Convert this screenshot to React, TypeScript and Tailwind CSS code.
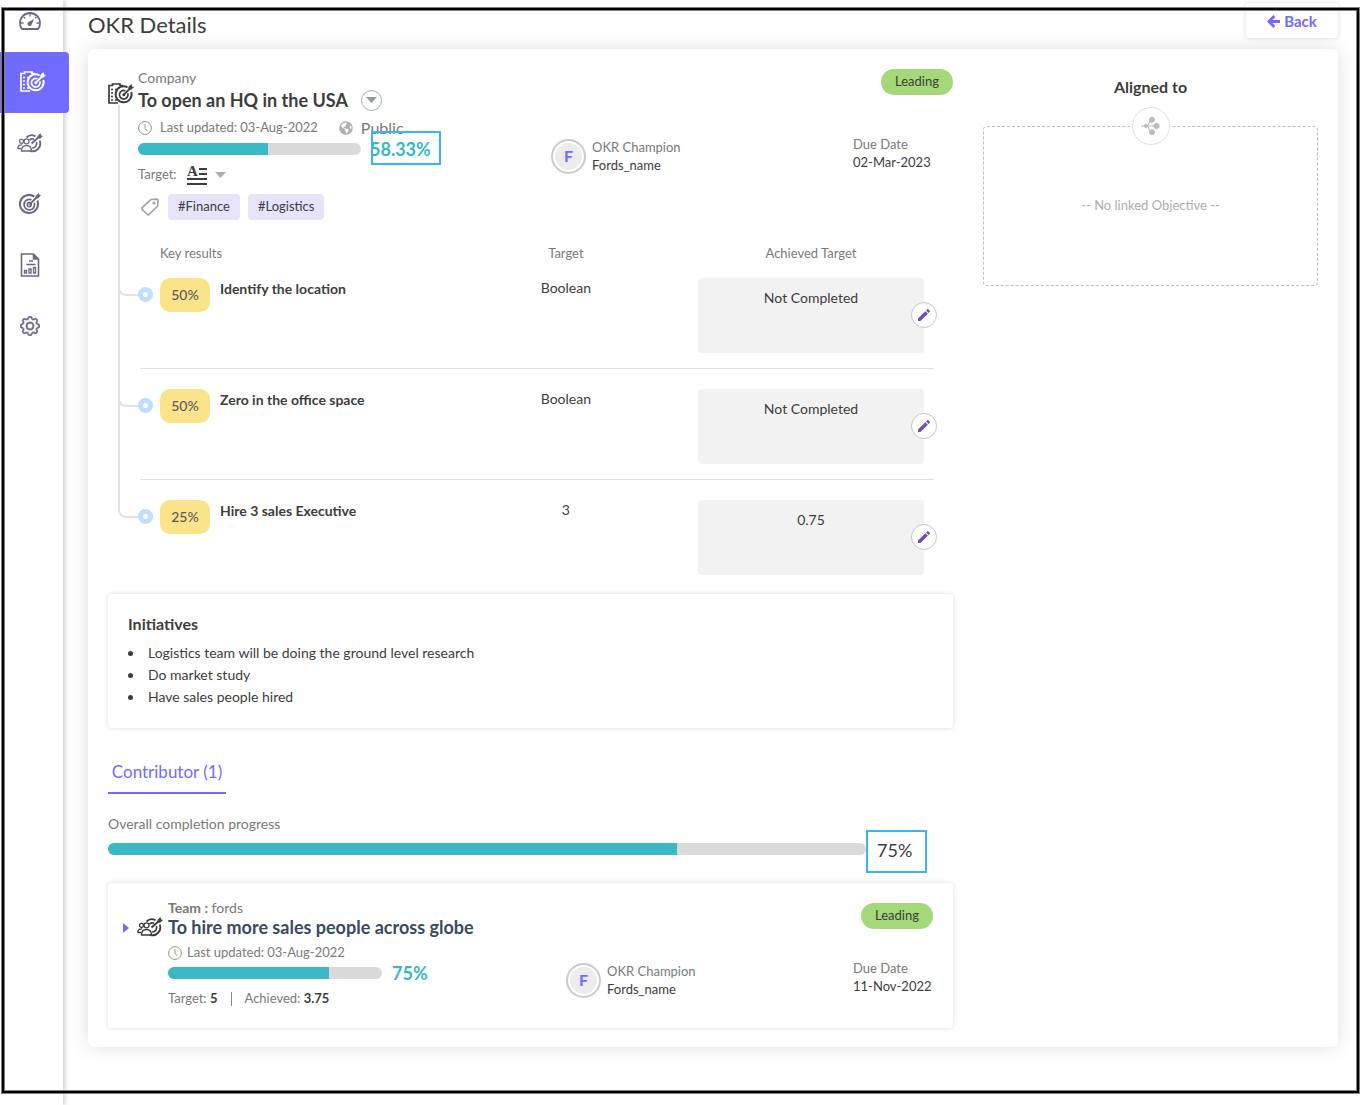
import React from "react"
import { BsGear } from "react-icons/bs"
import { FaGlobeAmericas } from "react-icons/fa"
import { MdEdit } from "react-icons/md"

type IconProps = {
    className?: string
}

type KeyResult = {
    title: string
    progress: string
    target: string
    achieved: string
}

const keyResults: KeyResult[] = [
    { title: "Identify the location", progress: "50%", target: "Boolean", achieved: "Not Completed" },
    { title: "Zero in the office space", progress: "50%", target: "Boolean", achieved: "Not Completed" },
    { title: "Hire 3 sales Executive", progress: "25%", target: "3", achieved: "0.75" },
]

const initiatives = [
    "Logistics team will be doing the ground level research",
    "Do market study",
    "Have sales people hired",
]

const tags = ["#Finance", "#Logistics"]

// Icons
function GaugeIcon({ className }: IconProps) {
    return (
        <svg className={className} width="22" height="18" viewBox="0 0 22 18" fill="none" stroke="currentColor">
            <path d="M3 17C1.6 15.3 1 13.500 1 11.200C1 5.500 5.500 1 11 1s10 4.500 10 10.200c0 2.300-.6 4.100-2 5.800z" strokeWidth="1.800" strokeLinejoin="round" />
            <path d="M11 2v2.600M4.700 5l1.500 1.500M17.300 5l-1.300 1.300M2 11h2.500M17.500 11H20" strokeWidth="1.300" />
            <path d="M15 7l-2.200 5.200a2.200 2.200 0 1 1-2.700-2.500z" fill="currentColor" stroke="none" />
        </svg>
    )
}

function CompanyIcon({ className }: IconProps) {
    return (
        <svg className={className} width="26" height="21" viewBox="0 0 26 21" fill="none" stroke="currentColor">
            <path d="M10 20H1V2.500h3.500V1H12v1.500h3" strokeWidth="1.700" />
            <path d="M3 6.500h2M7 6.500h3M3 10h2M3 13.500h2M3 17h2M7 17h2" strokeWidth="1.400" />
            <path d="M19.500 4.300A8 8 0 1 0 23.300 9" strokeWidth="1.900" />
            <path d="M17.500 7.800a4.300 4.300 0 1 0 2.300 2.500" strokeWidth="1.700" />
            <path d="M15.800 11.700L23 4.500" strokeWidth="1.800" />
            <path d="M20.500 6.500V3.700L23.500 1l.5 2.500 2 .5-2.800 2.700z" fill="currentColor" stroke="none" />
            <circle cx="15.800" cy="11.700" r="1.500" fill="currentColor" stroke="none" />
        </svg>
    )
}

function TeamIcon({ className }: IconProps) {
    return (
        <svg className={className} width="26" height="20" viewBox="0 0 26 20" fill="none" stroke="currentColor">
            <path d="M18.500 3.300A7.500 7.500 0 0 0 9.500 4.500M22.700 7.500A7.800 7.800 0 0 1 13 17.800" strokeWidth="1.900" />
            <path d="M17 6.200a4.500 4.500 0 0 0-4.500.8M19.500 9a4.500 4.500 0 0 1-4.500 6" strokeWidth="1.700" />
            <path d="M14.500 10.500L22.500 3.500" strokeWidth="2" />
            <path d="M20.500 5.500V3L23.500 0l.5 2.300 2 .7-2.800 2.700z" fill="currentColor" stroke="none" />
            <g strokeWidth="1.300">
                <circle cx="4.500" cy="8.300" r="2" />
                <circle cx="9.500" cy="8.300" r="2.500" />
                <path d="M.7 15.500c0-2.500 1.500-3.800 4.500-3.600M.7 15.500H4M4.500 18c0-3.400 1.700-5.500 5-5.500s5 2.100 5 5.500z" />
            </g>
        </svg>
    )
}

function TargetIcon({ className }: IconProps) {
    return (
        <svg className={className} width="22" height="22" viewBox="0 0 22 22" fill="none" stroke="currentColor">
            <path d="M15.300 3.700A9 9 0 1 0 18.300 7.500" strokeWidth="2.100" />
            <path d="M12.500 6.800a5.300 5.300 0 1 0 2.800 3" strokeWidth="1.800" />
            <circle cx="10.300" cy="11.600" r="2" strokeWidth="1.600" />
            <path d="M10.300 11.600L19.500 2.800" strokeWidth="2" />
            <path d="M16.500 5V3L20 0l.3 1.800 1.700.4L19 5.400z" fill="currentColor" stroke="none" />
        </svg>
    )
}

function ReportIcon({ className }: IconProps) {
    return (
        <svg className={className} width="20" height="24" viewBox="0 0 20 24" fill="none" stroke="currentColor">
            <path d="M1.500 1h12L18.500 6v17h-17z" strokeWidth="1.600" />
            <path d="M13.500 1v5h5" strokeWidth="1.500" />
            <path d="M14 2v4h4z" fill="currentColor" stroke="none" />
            <path d="M9 8h4M6.500 11.500h9" strokeWidth="1.500" />
            <path d="M4.500 17.500h2v2.500h-2zM9 16h2v4H9zM13.500 14.500h2V20h-2z" strokeWidth="1.300" />
        </svg>
    )
}

function ClockIcon() {
    return (
        <svg width="14" height="14" viewBox="0 0 14 14" fill="none" stroke="#8a9c80">
            <circle cx="7" cy="7" r="6.400" />
            <path d="M7 3v4.300l2 2.500" />
        </svg>
    )
}

function TagIcon() {
    return (
        <svg className="ml-0.5" width="20" height="20" viewBox="0 0 20 20" fill="none" stroke="#a5a5a5" strokeWidth="1.700" strokeLinejoin="round">
            <path d="M11.500 2.500L17 2.200q1 0 1 1l-.3 5.300q0 .6-.5 1l-8.200 8q-.8.700-1.500 0L2 12.300q-.7-.8 0-1.500l8.500-7.900q.5-.4 1-.4z" />
            <circle cx="14" cy="6" r="1.600" fill="#a5a5a5" stroke="none" />
        </svg>
    )
}

function BackArrow() {
    return (
        <svg width="13" height="13" viewBox="0 0 13 13" fill="none" stroke="currentColor" strokeWidth="2.800">
            <path d="M7.300 1L2 6.500 7.300 12M2.500 6.500H13" />
        </svg>
    )
}

function TreeIcon() {
    return (
        <svg width="20" height="20" viewBox="0 0 20 20" fill="#bdbdbd" stroke="#bdbdbd">
            <path d="M-2 10h16M5 10q3 0 3-3t3-3M5 10q3 0 3 3t3 3" fill="none" />
            <circle cx="5" cy="10" r="1.600" />
            <circle cx="11" cy="3.800" r="2.500" />
            <circle cx="15.500" cy="10" r="2.700" />
            <circle cx="11" cy="16.200" r="2.500" />
        </svg>
    )
}

function TextTypeIcon() {
    return (
        <svg className="overflow-visible" width="20" height="19" viewBox="0 0 20 19" stroke="#3d3d3d" strokeWidth="2">
            <text x="0" y="10" fontFamily="Liberation Serif, serif" fontSize="15" fontWeight="700" fill="#3d3d3d" stroke="none">A</text>
            <path d="M12 3h8M12 8h8M0 13h20M0 18h20" />
        </svg>
    )
}

function CaretDown() {
    return (
        <svg width="11" height="6" viewBox="0 0 11 6" fill="currentColor">
            <path d="M0 0h11L5.500 6z" />
        </svg>
    )
}

const menu = [
    { label: "Dashboard", icon: GaugeIcon },
    { label: "Company OKR", icon: CompanyIcon, active: true },
    { label: "Team OKR", icon: TeamIcon },
    { label: "My OKR", icon: TargetIcon },
    { label: "Reports", icon: ReportIcon },
    { label: "Settings", icon: BsGear },
]

function Sidebar() {
    return (
        <aside className="relative z-10 w-[63px] shrink-0 bg-white shadow-[2px_0_5px_rgba(0,0,0,0.2)]">
            <nav className="-mt-[9px] flex flex-col">
                {menu.map(({ label, icon: Icon, active }) => (
                    <a
                        key={label}
                        href="#"
                        aria-label={label}
                        className={active
                            ? "-mr-1.5 flex h-[61px] items-center rounded-r bg-[#716cff] pb-0.5 pl-5 text-white"
                            : "flex h-[61px] items-center justify-center pr-1 pb-0.5 text-[#6b6884]"}
                    >
                        <Icon className={label === "Settings" ? "size-5 stroke-[0.5px]" : ""} />
                    </a>
                ))}
            </nav>
        </aside>
    )
}

function Progress({ value, className }: { value: number, className: string }) {
    return (
        <div role="progressbar" aria-valuenow={value} className={`h-3 overflow-hidden rounded-full bg-[#dadada] ${className}`}>
            <div className="h-full bg-[#3bb8c5]" style={{ width: `${value}%` }} />
        </div>
    )
}

function Champion() {
    return (
        <div className="flex items-center gap-1.5">
            <div className="flex size-[35px] items-center justify-center rounded-full border-2 border-[#cbcbcb] bg-[#ececec] text-base font-bold text-[#716cff] inset-ring-2 inset-ring-white">F</div>
            <div className="leading-[18px]">
                <div className="text-[#7a7a7a]">OKR Champion</div>
                <div>Fords_name</div>
            </div>
        </div>
    )
}

function DueDate({ date }: { date: string }) {
    return (
        <div className="leading-[18px] whitespace-nowrap">
            <div className="text-[#7a7a7a]">Due Date</div>
            <div>{date}</div>
        </div>
    )
}

function Status() {
    return <span className="flex h-[26px] w-[72px] items-center justify-center self-end rounded-full bg-[#a4d878]">Leading</span>
}

function Objective() {
    return (
        <div className="relative grid grid-cols-[443fr_302fr_100fr] pb-[23px]">
            <div className="absolute top-9 bottom-0 left-2.5 w-0.5 bg-[#e2e2e2]" />
            <div className="flex">
                <CompanyIcon className="relative mt-3.5 mr-1 shrink-0 bg-white" />
                <div>
                    <div className="h-[17px] text-sm leading-[17px] text-[#7a7a7a]">Company</div>
                    <div className="flex h-7 items-center gap-[13px]">
                        <h2 className="text-lg font-bold">To open an HQ in the USA</h2>
                        <button aria-label="Show details" className="flex size-[21px] items-center justify-center rounded-full border border-[#a3a8b5] text-[#939bab]">
                            <CaretDown />
                        </button>
                    </div>
                    <div className="flex h-7 items-center text-[#7a7a7a]">
                        <ClockIcon />
                        <span className="ml-2">Last updated: 03-Aug-2022</span>
                        <FaGlobeAmericas className="ml-[21px] size-3.5 text-[#b0b0b0]" />
                        <span className="ml-2 text-base">Public</span>
                    </div>
                    <div className="flex h-3.5 items-center">
                        <Progress value={58.33} className="w-[223px]" />
                        <div className="relative ml-[9px] text-lg font-bold text-[#3bb8c5]">
                            58.33%
                            <div className="absolute inset-y-0 left-px -my-1 h-[34px] w-[70px] border-2 border-[#3ab5fb]" />
                        </div>
                    </div>
                    <div className="flex h-[38px] items-center text-[#7a7a7a]">
                        Target:
                        <span className="mr-2 ml-2.5"><TextTypeIcon /></span>
                        <button aria-label="Target type" className="text-[#adadad]"><CaretDown /></button>
                    </div>
                    <div className="flex h-[26px] items-center gap-2">
                        <TagIcon />
                        {tags.map((tag) => (
                            <span key={tag} className="flex h-[26px] items-center rounded bg-[#e6e3fb] px-2.5">{tag}</span>
                        ))}
                    </div>
                </div>
            </div>
            <div className="pt-[69px]"><Champion /></div>
            <div className="flex flex-col">
                <Status />
                <div className="mt-10"><DueDate date="02-Mar-2023" /></div>
            </div>
        </div>
    )
}

function KeyResults() {
    return (
        <table className="ml-8 w-[calc(100%-51px)] table-fixed text-center">
            <colgroup>
                <col className="w-[37%]" />
                <col />
                <col className="w-[236px]" />
            </colgroup>
            <thead>
                <tr className="h-5 leading-5 text-[#7a7a7a]">
                    <th className="relative pl-5 text-left font-normal">
                        <div className="absolute inset-y-0 -left-[22px] w-0.5 bg-[#e2e2e2]" />
                        Key results
                    </th>
                    <th className="font-normal">Target</th>
                    <th className="pr-2.5 font-normal">Achieved Target</th>
                </tr>
            </thead>
            <tbody className="align-top text-sm">
                {keyResults.map((kr, i) => {
                    const last = i === keyResults.length - 1
                    const pad = i === 0 ? "pt-[15px] pb-[15px]" : last ? "pt-5 pb-[19px]" : "pt-5 pb-[15px]"
                    return (
                        <tr key={kr.title} className={last ? "" : "border-b border-[#e2e2e2]"}>
                            <td className={`relative ${pad}`}>
                                <div className={`absolute top-0 -left-[22px] w-0.5 bg-[#e2e2e2] ${last ? "h-5" : "-bottom-px"}`} />
                                <div className="relative flex pl-5">
                                    <div className="absolute top-0 -left-[22px] h-[18px] w-6 rounded-bl-lg border-b-2 border-l-2 border-[#e2e2e2]" />
                                    <div className="absolute top-[9px] -left-0.5 size-[15px] rounded-full border-5 border-[#bfdefc] bg-white" />
                                    <span className="flex h-[34px] w-[50px] shrink-0 items-center justify-center rounded-[10px] bg-[#fbe38a] font-medium text-[#5c5c5c]">{kr.progress}</span>
                                    <span className="ml-2.5 leading-[22px] font-bold">{kr.title}</span>
                                </div>
                            </td>
                            <td className={`leading-5 ${pad}`}>{kr.target}</td>
                            <td className={`pr-2.5 ${pad}`}>
                                <div className="relative h-[75px] rounded bg-[#f2f2f2] pt-2.5 leading-5">
                                    {kr.achieved}
                                    <button aria-label={`Edit ${kr.title}`} className="absolute top-6 -right-[13px] flex size-[26px] items-center justify-center rounded-full border border-[#c6c6c6] bg-white text-[#714cb5]">
                                        <MdEdit className="size-4" />
                                    </button>
                                </div>
                            </td>
                        </tr>
                    )
                })}
            </tbody>
        </table>
    )
}

function Contributor() {
    return (
        <section className="grid grid-cols-[443fr_287fr_80fr] rounded px-5 pt-5 pb-[11px] pl-[15px] shadow-[0_0_5px_rgba(0,0,0,0.15)]">
            <div className="flex">
                <button aria-label="Expand" className="mt-5 h-2.5 text-[#716cff]">
                    <svg width="6" height="10" viewBox="0 0 6 10" fill="currentColor"><path d="M0 0l6 5-6 5z" /></svg>
                </button>
                <TeamIcon className="mt-3.5 mr-[5px] ml-2 shrink-0 text-[#3d3d3d]" />
                <div className="text-[#7a7a7a]">
                    <div className="h-[11px] text-sm leading-[10px]"><b>Team :</b> fords</div>
                    <h3 className="h-[26px] text-lg leading-[26px] font-bold text-[#3b4a63]">To hire more sales people across globe</h3>
                    <div className="flex h-[25px] items-center gap-[5px]"><ClockIcon />Last updated: 03-Aug-2022</div>
                    <div className="flex h-4 items-center gap-2.5">
                        <Progress value={75} className="w-[214px]" />
                        <span className="text-lg font-bold text-[#3bb8c5]">75%</span>
                    </div>
                    <div className="flex h-9 items-center">
                        <span>Target: <b className="text-[#3d3d3d]">5</b></span>
                        <span className="mx-[13px] h-3.5 w-px bg-[#8a8a8a]" />
                        <span>Achieved: <b className="text-[#3d3d3d]">3.75</b></span>
                    </div>
                </div>
            </div>
            <div className="pt-[59px]"><Champion /></div>
            <div className="flex flex-col">
                <Status />
                <div className="mt-[30px]"><DueDate date="11-Nov-2022" /></div>
            </div>
        </section>
    )
}

function App() {
    return (
        <div className="relative flex min-h-screen bg-white font-[Lato,sans-serif] text-[13px] text-[#3d3d3d]">
            <Sidebar />
            <main className="min-w-0 flex-1 px-[25px] pb-[58px]">
                <header className="flex h-[49px] items-start justify-between">
                    <h1 className="pt-2.5 text-[22px] leading-[30px]">OKR Details</h1>
                    <button className="mt-[3px] flex h-[35px] w-[92px] items-center justify-center gap-1 rounded bg-white pt-0.5 text-[15px] font-bold text-[#716cff] shadow-[0_0_5px_rgba(0,0,0,0.15)]">
                        <BackArrow />Back
                    </button>
                </header>
                <div className="grid grid-cols-[845fr_335fr] gap-[30px] rounded-md bg-white px-5 pt-5 pb-[19px] shadow-[0_0_20px_rgba(0,0,0,0.13)]">
                    <div className="min-w-0">
                        <Objective />
                        <KeyResults />
                        <section className="rounded p-5 text-sm leading-[22px] shadow-[0_0_5px_rgba(0,0,0,0.15)]">
                            <h3 className="mb-2 text-base leading-5 font-bold">Initiatives</h3>
                            <ul className="list-disc pl-4">
                                {initiatives.map((item) => <li key={item} className="pl-1">{item}</li>)}
                            </ul>
                        </section>
                        <div className="mt-6 flex">
                            <button className="h-[42px] w-[118px] border-b-2 border-[#716cff] text-[17px] text-[#716cff]">Contributor (1)</button>
                        </div>
                        <div className="mt-5 text-sm leading-5 text-[#7a7a7a]">Overall completion progress</div>
                        <div className="-mt-1 mb-2.5 flex">
                            <Progress value={75} className="mt-[13px] flex-1" />
                            <div className="mr-[26px] h-[43px] w-[61px] border-2 border-[#3ab5fb] pl-[9px] text-lg leading-9">75%</div>
                        </div>
                        <Contributor />
                    </div>
                    <aside className="text-center">
                        <h3 className="pt-2 text-base leading-5 font-bold">Aligned to</h3>
                        <div className="relative mt-[29px] flex h-40 items-center justify-center rounded border border-dashed border-[#bdbdbd] text-[#adadad]">
                            <div className="absolute inset-x-0 -top-5 mx-auto flex size-[38px] items-center justify-center rounded-full border border-[#e0e0e0] bg-white">
                                <TreeIcon />
                            </div>
                            -- No linked Objective --
                        </div>
                    </aside>
                </div>
            </main>
            {/* outline around the whole page */}
            <div className="pointer-events-none absolute top-2 right-1 bottom-3 left-0.5 z-20 border-2 border-black shadow-[0_0_0_1px_#808080,inset_0_0_0_1px_#808080]" />
        </div>
    )
}

export default App
